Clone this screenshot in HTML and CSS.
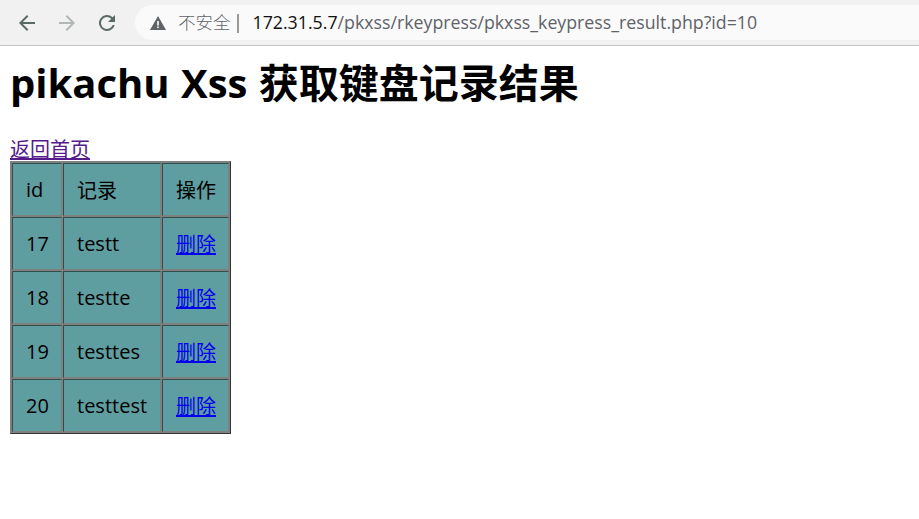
FILE: index.html
```html
<!DOCTYPE html>
<html lang="zh">
<head>
<meta charset="utf-8">
<title>pikachu Xss 获取键盘记录结果</title>
<link rel="stylesheet" href="styles.css">
</head>
<body>
<header class="toolbar">
  <button class="nav-btn" aria-label="后退">
    <svg viewBox="0 0 24 24" width="24" height="24"><path d="M20 11H7.8l5.6-5.6L12 4l-8 8 8 8 1.4-1.4L7.8 13H20z" fill="#5a6b66"/></svg>
  </button>
  <button class="nav-btn" aria-label="前进">
    <svg viewBox="0 0 24 24" width="24" height="24"><path d="M4 11h12.2l-5.6-5.6L12 4l8 8-8 8-1.4-1.4 5.6-5.6H4z" fill="#b0b8b5"/></svg>
  </button>
  <button class="nav-btn" aria-label="重新加载">
    <svg viewBox="0 0 24 24" width="24" height="24"><path d="M17.65 6.35A8 8 0 1 0 19.73 14h-2.08a6 6 0 1 1-1.41-6.24L13 11h7V4z" fill="#5a6b66"/></svg>
  </button>
  <div class="omnibox">
    <svg class="warn" viewBox="0 0 16 16" width="16" height="16"><path d="M8 1 16 15H0z" fill="#5f6368"/><rect x="7.2" y="6" width="1.6" height="4.6" fill="#fff"/><rect x="7.2" y="11.5" width="1.6" height="1.6" fill="#fff"/></svg>
    <span class="insecure">不安全</span>
    <span class="sep"></span>
    <span class="url"><span class="host">172.31.5.7</span>/pkxss/rkeypress/pkxss_keypress_result.php?id=10</span>
  </div>
</header>
<main class="page">
  <h1 class="title">pikachu Xss 获取键盘记录结果</h1>
  <a class="home" href="#visited">返回首页</a>
  <table class="records">
    <tr><td class="c-id">id</td><td class="c-rec">记录</td><td class="c-op">操作</td></tr>
    <tr><td class="c-id">17</td><td class="c-rec">testt</td><td class="c-op"><a class="del" href="#">删除</a></td></tr>
    <tr><td class="c-id">18</td><td class="c-rec">testte</td><td class="c-op"><a class="del" href="#">删除</a></td></tr>
    <tr><td class="c-id">19</td><td class="c-rec">testtes</td><td class="c-op"><a class="del" href="#">删除</a></td></tr>
    <tr><td class="c-id">20</td><td class="c-rec">testtest</td><td class="c-op"><a class="del" href="#">删除</a></td></tr>
  </table>
</main>
</body>
</html>
```
FILE: styles.css
```css
html, body { margin: 0; padding: 0; background: #fff; }
body { width: 919px; height: 519px; overflow: hidden; font-family: "Liberation Serif", "Noto Sans CJK SC", serif; }
.toolbar { box-sizing: border-box; height: 46px; background: #f1f1f1; border-bottom: 1px solid #c4c4c4; display: flex; align-items: center; padding: 0 0 0 15px; }
.nav-btn { width: 24px; height: 24px; padding: 0; margin-right: 16px; border: 0; background: none; display: flex; }
.omnibox { box-sizing: border-box; flex: 1; height: 35px; padding: 0 0 2px 15px; background: #fafafa; border-radius: 18px 0 0 18px; display: flex; align-items: center; font-family: "Open Sans", "Noto Sans CJK SC", sans-serif; font-size: 17.75px; color: #5f6368; white-space: nowrap; }
.warn { margin: 3px 12px 0 0; }
.insecure { font-family: "Noto Sans CJK SC", sans-serif; font-weight: 300; font-size: 17.5px; }
.sep { width: 2px; height: 19px; background: #999; margin: 3px 14px 0 6px; }
.host { color: #111; }
.page { padding: 0 10px; }
.title { font: bold 40px/1.3 "Open Sans", "Noto Sans CJK SC", sans-serif; word-spacing: 1px; margin: 11px 0 29px; }
.home { display: block; width: max-content; margin-bottom: -1px; font-size: 20px; line-height: 24px; color: #551a8b; }
.records { border-collapse: separate; border-spacing: 1px; table-layout: fixed; width: 221px; background: #808080; border: 1px solid; border-color: #808080 #333 #333 #808080; font: 20px "Open Sans", "Noto Sans CJK SC", sans-serif; color: #000; }
.records td { height: 53px; box-sizing: border-box; padding: 0 0 0 13px; white-space: nowrap; background: #5f9ea0; border: 1px solid; border-color: #2f4f4f #808080 #808080 #2f4f4f; }
.c-id { width: 50px; }
.c-rec { width: 98px; }
.c-op { width: 67px; }
.del { font-family: "Liberation Serif", "Noto Sans CJK SC", serif; color: #00e; }
```
